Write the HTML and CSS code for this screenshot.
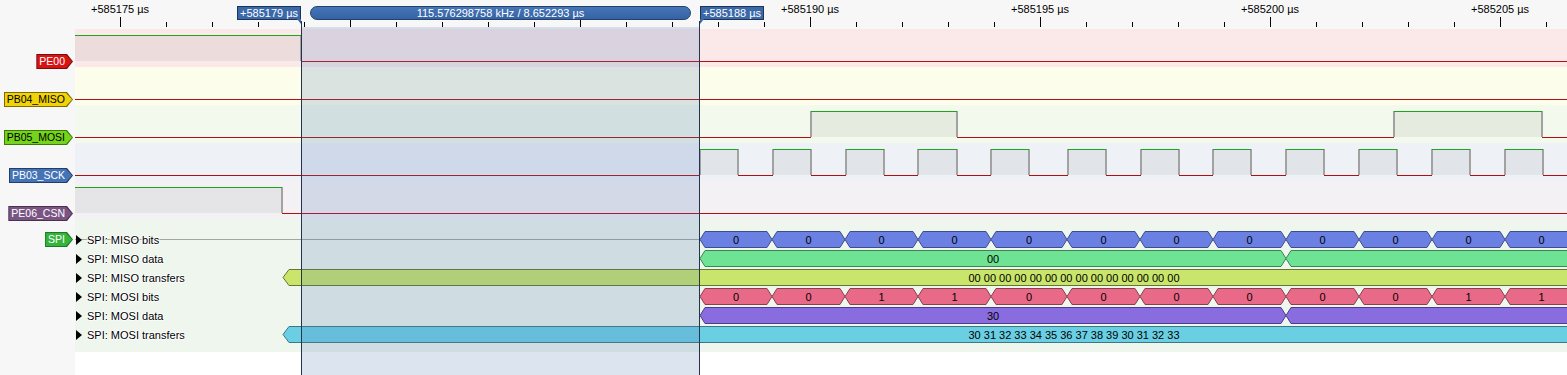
FILE: index.html
```html
<!DOCTYPE html>
<html lang="en">
<head>
  <meta charset="UTF-8" />
  <title>PulseView - SPI capture</title>
  <link rel="stylesheet" href="styles.css">
</head>
<body>
<div class="view">

  <!-- time ruler -->
  <div class="row ruler-row">
    <div class="hdr"></div>
    <div class="lane ruler">
      <svg width="1492" height="29" viewBox="75 0 1492 29">
        <path class="tick" d="M120.5 17V27M350.5 17V27M580.5 17V27M810.5 17V27M1040.5 17V27M1270.5 17V27M1500.5 17V27"/>
        <path class="tick" d="M166.5 22V27M212.5 22V27M258.5 22V27M304.5 22V27M396.5 22V27M442.5 22V27M488.5 22V27M534.5 22V27M626.5 22V27M672.5 22V27M718.5 22V27M764.5 22V27M856.5 22V27M902.5 22V27M948.5 22V27M994.5 22V27M1086.5 22V27M1132.5 22V27M1178.5 22V27M1224.5 22V27M1316.5 22V27M1362.5 22V27M1408.5 22V27M1454.5 22V27M1546.5 22V27"/>
        <text x="120" y="13">+585175 µs</text>
        <text x="810" y="13">+585190 µs</text>
        <text x="1040" y="13">+585195 µs</text>
        <text x="1270" y="13">+585200 µs</text>
        <text x="1500" y="13">+585205 µs</text>
      </svg>
    </div>
  </div>

  <!-- logic channels -->
  <div class="row trace">
    <div class="hdr"><span class="tag tag-red">PE00</span></div>
    <div class="lane bg-pe00">
      <svg width="1492" height="38" viewBox="75 0 1492 38">
        <rect class="hi-fill" x="75" y="6" width="226" height="26"/>
        <path class="e" d="M301 6V32"/>
        <path class="h" d="M75 6.5H301"/>
        <path class="l" d="M301 32.5H1567"/>
      </svg>
    </div>
  </div>

  <div class="row trace">
    <div class="hdr"><span class="tag tag-yellow">PB04_MISO</span></div>
    <div class="lane bg-miso">
      <svg width="1492" height="38" viewBox="75 0 1492 38">
        <path class="l" d="M75 32.5H1567"/>
      </svg>
    </div>
  </div>

  <div class="row trace">
    <div class="hdr"><span class="tag tag-green">PB05_MOSI</span></div>
    <div class="lane bg-mosi">
      <svg width="1492" height="38" viewBox="75 0 1492 38">
        <rect class="hi-fill" x="811" y="6" width="146" height="26"/>
        <rect class="hi-fill" x="1394" y="6" width="148" height="26"/>
        <path class="e" d="M811 6V32M957 6V32M1394 6V32M1542 6V32"/>
        <path class="h" d="M811 6.5H957M1394 6.5H1542"/>
        <path class="l" d="M75 32.5H811M957 32.5H1394M1542 32.5H1567"/>
      </svg>
    </div>
  </div>

  <div class="row trace">
    <div class="hdr"><span class="tag tag-blue">PB03_SCK</span></div>
    <div class="lane bg-sck">
      <svg width="1492" height="38" viewBox="75 0 1492 38">
        <g class="hi-fill">
          <rect x="700" y="6" width="38" height="26"/>
          <rect x="773" y="6" width="38" height="26"/>
          <rect x="846" y="6" width="38" height="26"/>
          <rect x="918" y="6" width="39" height="26"/>
          <rect x="991" y="6" width="38" height="26"/>
          <rect x="1068" y="6" width="38" height="26"/>
          <rect x="1141" y="6" width="38" height="26"/>
          <rect x="1213" y="6" width="38" height="26"/>
          <rect x="1286" y="6" width="38" height="26"/>
          <rect x="1359" y="6" width="38" height="26"/>
          <rect x="1432" y="6" width="38" height="26"/>
          <rect x="1505" y="6" width="38" height="26"/>
        </g>
        <path class="e" d="M700 6V32M738 6V32M773 6V32M811 6V32M846 6V32M884 6V32M918 6V32M957 6V32M991 6V32M1029 6V32M1068 6V32M1106 6V32M1141 6V32M1179 6V32M1213 6V32M1251 6V32M1286 6V32M1324 6V32M1359 6V32M1397 6V32M1432 6V32M1470 6V32M1505 6V32M1543 6V32"/>
        <path class="h" d="M700 6.5H738M773 6.5H811M846 6.5H884M918 6.5H957M991 6.5H1029M1068 6.5H1106M1141 6.5H1179M1213 6.5H1251M1286 6.5H1324M1359 6.5H1397M1432 6.5H1470M1505 6.5H1543"/>
        <path class="l" d="M75 32.5H700M738 32.5H773M811 32.5H846M884 32.5H918M957 32.5H991M1029 32.5H1068M1106 32.5H1141M1179 32.5H1213M1251 32.5H1286M1324 32.5H1359M1397 32.5H1432M1470 32.5H1505M1543 32.5H1567"/>
      </svg>
    </div>
  </div>

  <div class="row trace">
    <div class="hdr"><span class="tag tag-purple">PE06_CSN</span></div>
    <div class="lane bg-csn">
      <svg width="1492" height="38" viewBox="75 0 1492 38">
        <rect class="hi-fill" x="75" y="6" width="207" height="26"/>
        <path class="e" d="M282 6V32"/>
        <path class="h" d="M75 6.5H282"/>
        <path class="l" d="M282 32.5H1567"/>
      </svg>
    </div>
  </div>

  <!-- SPI decoder -->
  <div class="row dec">
    <div class="hdr"><span class="tag tag-spi">SPI</span></div>
    <div class="lane bg-spi dec-lane">
      <svg width="1492" height="133" viewBox="75 0 1492 133">
        <defs>
          <g id="bits">
            <polygon points="700,20.5 705,12.5 767,12.5 772,20.5 767,28.5 705,28.5"/>
            <polygon points="772,20.5 777,12.5 840,12.5 845,20.5 840,28.5 777,28.5"/>
            <polygon points="845,20.5 850,12.5 913,12.5 918,20.5 913,28.5 850,28.5"/>
            <polygon points="918,20.5 923,12.5 986,12.5 991,20.5 986,28.5 923,28.5"/>
            <polygon points="991,20.5 996,12.5 1062,12.5 1067,20.5 1062,28.5 996,28.5"/>
            <polygon points="1067,20.5 1072,12.5 1135,12.5 1140,20.5 1135,28.5 1072,28.5"/>
            <polygon points="1140,20.5 1145,12.5 1208,12.5 1213,20.5 1208,28.5 1145,28.5"/>
            <polygon points="1213,20.5 1218,12.5 1281,12.5 1286,20.5 1281,28.5 1218,28.5"/>
            <polygon points="1286,20.5 1291,12.5 1354,12.5 1359,20.5 1354,28.5 1291,28.5"/>
            <polygon points="1359,20.5 1364,12.5 1427,12.5 1432,20.5 1427,28.5 1364,28.5"/>
            <polygon points="1432,20.5 1437,12.5 1500,12.5 1505,20.5 1500,28.5 1437,28.5"/>
            <polygon points="1505,20.5 1510,12.5 1573,12.5 1578,20.5 1573,28.5 1510,28.5"/>
          </g>
          <g id="data">
            <polygon points="700,39.5 705,31.5 1281,31.5 1286,39.5 1281,47.5 705,47.5"/>
            <polygon points="1286,39.5 1291,31.5 1595,31.5 1600,39.5 1595,47.5 1291,47.5"/>
          </g>
          <polygon id="xfer" points="283,58.5 289,50.5 1995,50.5 2000,58.5 1995,66.5 289,66.5"/>
        </defs>

        <path class="dline" d="M75 20.5H700"/>

        <use href="#bits" class="a-miso-bits"/>
        <use href="#data" class="a-miso-data"/>
        <use href="#xfer" class="a-miso-xfer"/>
        <use href="#bits" y="57" class="a-mosi-bits"/>
        <use href="#data" y="57" class="a-mosi-data"/>
        <use href="#xfer" y="57" class="a-mosi-xfer"/>

        <g class="at">
          <text x="736" y="24.5">0</text>
          <text x="808.5" y="24.5">0</text>
          <text x="881.5" y="24.5">0</text>
          <text x="954.5" y="24.5">0</text>
          <text x="1029" y="24.5">0</text>
          <text x="1103.5" y="24.5">0</text>
          <text x="1176.5" y="24.5">0</text>
          <text x="1249.5" y="24.5">0</text>
          <text x="1322.5" y="24.5">0</text>
          <text x="1395.5" y="24.5">0</text>
          <text x="1468.5" y="24.5">0</text>
          <text x="1541.5" y="24.5">0</text>

          <text x="993" y="43.5">00</text>
          <text x="1074" y="62.5">00 00 00 00 00 00 00 00 00 00 00 00 00 00</text>

          <text x="736" y="81.5">0</text>
          <text x="808.5" y="81.5">0</text>
          <text x="881.5" y="81.5">1</text>
          <text x="954.5" y="81.5">1</text>
          <text x="1029" y="81.5">0</text>
          <text x="1103.5" y="81.5">0</text>
          <text x="1176.5" y="81.5">0</text>
          <text x="1249.5" y="81.5">0</text>
          <text x="1322.5" y="81.5">0</text>
          <text x="1395.5" y="81.5">0</text>
          <text x="1468.5" y="81.5">1</text>
          <text x="1541.5" y="81.5">1</text>

          <text x="993" y="100.5">30</text>
          <text x="1074" y="119.5">30 31 32 33 34 35 36 37 38 39 30 31 32 33</text>
        </g>
      </svg>
      <div class="titles">
        <div class="title">SPI: MISO bits</div>
        <div class="title">SPI: MISO data</div>
        <div class="title">SPI: MISO transfers</div>
        <div class="title">SPI: MOSI bits</div>
        <div class="title">SPI: MOSI data</div>
        <div class="title">SPI: MOSI transfers</div>
      </div>
    </div>
  </div>

  <div class="row rest">
    <div class="hdr"></div>
    <div class="lane"></div>
  </div>

  <!-- cursors -->
  <div class="cursor-band"></div>
  <div class="cur-label cur-a">+585179 µs</div>
  <div class="cur-pill">115.576298758 kHz / 8.652293 µs</div>
  <div class="cur-label cur-b">+585188 µs</div>
</div>
</body>
</html>
```

FILE: styles.css
```css
* {
  box-sizing: border-box;
}
body {
  margin: 0;
  font-family: "Liberation Sans", Arial, sans-serif;
  font-size: 11px;
  background: #fff;
  color: #000;
}
.view {
  position: relative;
  width: 1567px;
  height: 375px;
  overflow: hidden;
  display: flex;
  flex-direction: column;
}
.row {
  display: flex;
  flex: none;
}
.hdr {
  width: 75px;
  flex: none;
  background: #f7f7f7;
  display: flex;
  justify-content: flex-end;
  align-items: flex-start;
  padding-right: 2px;
}
.lane {
  flex: 1;
  min-width: 0;
}
.lane svg {
  display: block;
}

/* ruler */
.ruler-row { height: 29px; }
.ruler { background: #f7f7f7; }
.tick { stroke: #000; stroke-width: 1; fill: none; }
.ruler text {
  font-size: 11px;
  text-anchor: middle;
  fill: #000;
}

/* channel rows */
.trace { height: 38px; }
.trace .hdr { padding-top: 25px; }
.bg-pe00 { background: #fbe9e9; }
.bg-miso { background: #fdfdeb; }
.bg-mosi { background: #f3f9ec; }
.bg-sck { background: #eef1f6; }
.bg-csn { background: #f3f1f4; }
.bg-spi { background: #eef6ee; }

.hi-fill { fill: rgba(60, 60, 60, 0.07); }
.h { stroke: #1ea51e; stroke-width: 1; fill: none; }
.l { stroke: #b01010; stroke-width: 1; fill: none; }
.e { stroke: #a2a2a2; stroke-width: 2; fill: none; }

/* channel tags */
.tag {
  position: relative;
  display: inline-block;
  height: 15px;
  line-height: 15px;
  padding: 0 8px 0 3px;
  font-size: 10.5px;
  white-space: nowrap;
  clip-path: polygon(0 0, calc(100% - 6px) 0, 100% 50%, calc(100% - 6px) 100%, 0 100%);
}
.tag::before {
  content: "";
  position: absolute;
  inset: 1px;
  z-index: -1;
  clip-path: polygon(0 0, calc(100% - 6px) 0, 100% 50%, calc(100% - 6px) 100%, 0 100%);
}
.tag-red { background: #7e0c0c; color: #fff; }
.tag-red::before { background: #d61414; }
.tag-yellow { background: #7d6d00; color: #000; }
.tag-yellow::before { background: #f0d30a; }
.tag-green { background: #3d7a0c; color: #000; }
.tag-green::before { background: #74d31a; }
.tag-blue { background: #223f6a; color: #fff; }
.tag-blue::before { background: #4473b6; }
.tag-purple { background: #4a3150; color: #fff; }
.tag-purple::before { background: #7a5584; }
.tag-spi { background: #1c7a22; color: #fff; }
.tag-spi::before { background: #34b43c; }

/* decoder */
.dec { height: 133px; }
.dec .hdr { padding-top: 13px; }
.dec-lane {
  display: grid;
}
.dec-lane > svg,
.dec-lane > .titles {
  grid-area: 1 / 1;
}
.dline { stroke: #a4a4a4; fill: none; }
.a-miso-bits { fill: #6b80e3; stroke: #3f4d8c; }
.a-miso-data { fill: #6fe394; stroke: #3b8453; }
.a-miso-xfer { fill: #c9e56b; stroke: #667533; }
.a-mosi-bits { fill: #e86a88; stroke: #8a3e50; }
.a-mosi-data { fill: #896ce0; stroke: #4d3c86; }
.a-mosi-xfer { fill: #6bcfe4; stroke: #3b7886; }
.at text {
  font-size: 11px;
  text-anchor: middle;
  fill: #000;
}
.titles {
  display: flex;
  flex-direction: column;
  padding-top: 11px;
}
.title {
  height: 19px;
  display: flex;
  align-items: center;
  gap: 5px;
  padding-left: 1px;
  text-shadow: 1px 0 #fff, -1px 0 #fff, 0 1px #fff, 0 -1px #fff;
}
.title::before {
  content: "";
  border-left: 6px solid #000;
  border-top: 5px solid transparent;
  border-bottom: 5px solid transparent;
}

.rest { flex: 1; }

/* cursors */
.cursor-band {
  position: absolute;
  left: 301px;
  top: 21px;
  width: 399px;
  bottom: 0;
  border-left: 1px solid #24344c;
  border-right: 1px solid #24344c;
  background: linear-gradient(transparent 6px, rgba(80, 120, 180, 0.2) 6px);
  pointer-events: none;
}
.cur-label {
  position: absolute;
  top: 6px;
  height: 14px;
  width: 64px;
  background: #3b68a9;
  border: 1px solid #1d3557;
  color: #fff;
  line-height: 12px;
  text-align: center;
  white-space: nowrap;
}
.cur-label::after {
  content: "";
  position: absolute;
  top: 12px;
  border-top: 5px solid #3b68a9;
}
.cur-a { left: 237px; }
.cur-a::after {
  right: -1px;
  border-left: 4px solid transparent;
}
.cur-b { left: 700px; }
.cur-b::after {
  left: -1px;
  border-right: 4px solid transparent;
}
.cur-pill {
  position: absolute;
  left: 310px;
  top: 6px;
  width: 381px;
  height: 14px;
  border-radius: 7px;
  background: linear-gradient(#4676b8, #3562a3);
  border: 1px solid #22426e;
  color: #fff;
  line-height: 12px;
  text-align: center;
  white-space: nowrap;
}
```
